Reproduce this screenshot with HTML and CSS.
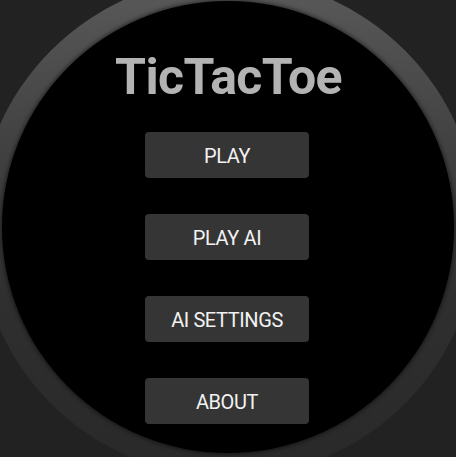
FILE: index.html
```html
<!DOCTYPE html>
<html lang="en">
<head>
  <meta charset="UTF-8" />
  <meta name="viewport" content="width=device-width,initial-scale=1.0" />
  <title>TicTacToe</title>
  <link rel="stylesheet" href="styles.css">
</head>
<body>

  <!-- Round watch: bezel ring + black face -->
  <div class="bezel">
    <div class="face">
      <h1>TicTacToe</h1>

      <!-- Main menu -->
      <div class="menu">
        <button type="button">PLAY</button>
        <button type="button">PLAY AI</button>
        <button type="button">AI SETTINGS</button>
        <button type="button">ABOUT</button>
      </div>
    </div>
  </div>

</body>
</html>
```

FILE: styles.css
```css
* { margin:0; padding:0; box-sizing:border-box; }
html, body { width:456px; height:457px; overflow:hidden; }
body { background:#222; font-family:Roboto,"Liberation Sans",sans-serif; }

/* Watch frame */
.bezel {
  width:500px; height:500px; margin:-23px 0 0 -22px; padding:24px;
  border-radius:50%;
  background:linear-gradient(180deg,#5a5a5a 0%,#444 30%,#2f2f2f 65%,#292929 100%);
}
.face {
  width:452px; height:452px; border-radius:50%; background:#000;
  box-shadow:0 0 4px 1px rgba(0,0,0,0.55);
  display:flex; flex-direction:column; align-items:center;
  padding-top:46px;
}

/* Title */
h1 {
  font-size:50px; line-height:60px; font-weight:700; color:#b3b3b3;
  letter-spacing:-0.6px;
  margin-bottom:25px; margin-left:1px;
}

/* Menu buttons */
.menu { display:flex; flex-direction:column; gap:36px; margin-left:-2px; }
.menu button {
  width:164px; height:46px; border:none; border-radius:4px;
  background:#353535; color:#f2f2f2;
  font-family:Roboto,"Liberation Sans",sans-serif; font-size:20px;
  letter-spacing:-0.4px; padding-top:1px;
  cursor:pointer;
}
```
